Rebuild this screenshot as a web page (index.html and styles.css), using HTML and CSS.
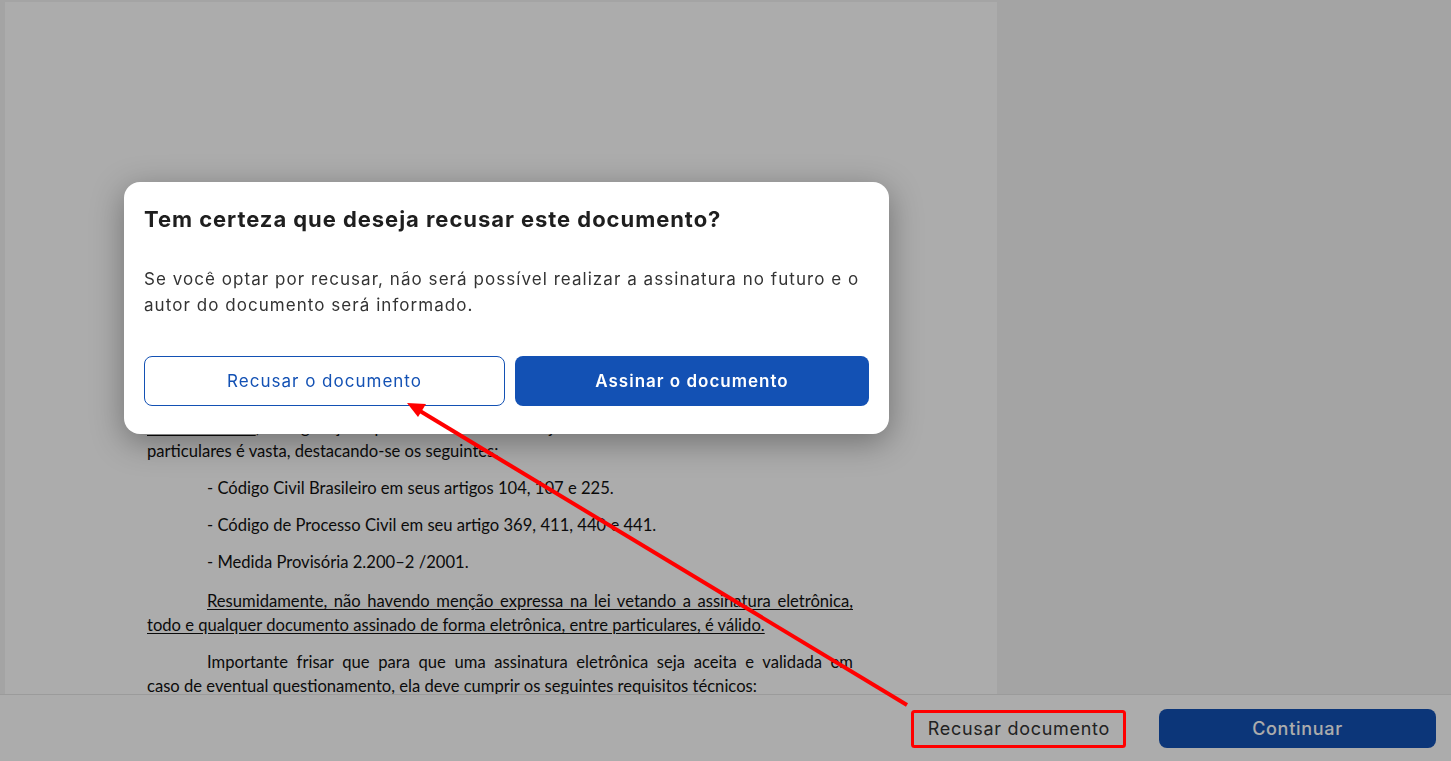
FILE: index.html
```html
<html lang="pt-BR">
<head>
    <meta charset="UTF-8">
    <meta name="viewport" content="width=device-width, initial-scale=1.0">
    <title>Assinatura de documento</title>
    <link rel="stylesheet" href="styles.css">
</head>
<body>
    <div class="app">
        <main class="viewer">
            <div class="page">
                <div class="doc">
                    <p class="cont"><span class="line"><u>Nesse sentido</u>, a legislação que trata da validade jurídica de documentos firmados entre</span>particulares é vasta, destacando-se os seguintes:</p>
                    <p>- Código Civil Brasileiro em seus artigos 104, 107 e 225.</p>
                    <p>- Código de Processo Civil em seu artigo 369, 411, 440 e 441.</p>
                    <p>- Medida Provisória 2.200–2 /2001.</p>
                    <p class="summary"><u>Resumidamente, não havendo menção expressa na lei vetando a assinatura eletrônica, todo e qualquer documento assinado de forma eletrônica, entre particulares, é válido.</u></p>
                    <p>Importante frisar que para que uma assinatura eletrônica seja aceita e validada em caso&nbsp;de eventual questionamento, ela deve cumprir os seguintes requisitos técnicos:</p>
                </div>
            </div>
            <aside class="side"></aside>
        </main>
        <footer class="actions">
            <button class="btn-text">Recusar documento</button>
            <button class="btn-continue">Continuar</button>
        </footer>
    </div>

    <div class="backdrop"></div>

    <div class="dialog">
        <h2>Tem certeza que deseja recusar este documento?</h2>
        <p>Se você optar por recusar, não será possível realizar a assinatura no futuro e o autor do documento será informado.</p>
        <div class="dialog-actions">
            <button class="btn-outline">Recusar o documento</button>
            <button class="btn-primary">Assinar o documento</button>
        </div>
    </div>

    <!-- red callout: box around the footer button, arrow up to the dialog -->
    <svg class="callout" width="1451" height="761" viewBox="0 0 1451 761">
        <rect x="912.5" y="711.5" width="212" height="35" rx="2" fill="none" stroke="#ff0000" stroke-width="3"/>
        <line x1="907" y1="705" x2="420" y2="411" stroke="#ff0000" stroke-width="4"/>
        <polygon points="407,403 426,404 418,417" fill="#ff0000"/>
    </svg>
</body>
</html>
```

FILE: styles.css
```css
body {
    margin: 0;
    font-family: Inter, "Noto Sans", sans-serif;
    background: #f3f3f3;
    overflow: hidden;
}

.app {
    width: 1451px;
    height: 761px;
    display: flex;
    flex-direction: column;
}

.viewer {
    height: 694px;
    display: flex;
    padding: 2px 0 0 5px;
    box-sizing: border-box;
    background: #f3f3f3;
    overflow: hidden;
}

.page {
    width: 992px;
    flex-shrink: 0;
    background: #fff;
}

.side {
    flex: 1;
}

.doc {
    width: 706px;
    padding: 413px 0 0 142px;
    font-family: Lato, "Liberation Sans", sans-serif;
    font-size: 16.6px;
    line-height: 24px;
    color: #111;
    text-align: justify;
}

.doc p {
    margin: 0 0 13px;
    text-indent: 60px;
}

.doc p.cont {
    text-indent: 0;
}

.doc p.summary {
    margin-top: 15px;
}

.doc .line {
    display: block;
    text-align-last: justify;
}

.doc u {
    text-underline-offset: 2px;
}

.actions {
    flex: 1;
    display: flex;
    align-items: center;
    justify-content: flex-end;
    gap: 33px;
    padding: 0 15px 0 0;
    background: #fff;
    border-top: 1px solid #e6e6e6;
}

.actions button {
    font-family: inherit;
    font-size: 18px;
    letter-spacing: 0.7px;
    height: 39px;
    border: none;
    cursor: pointer;
}

.btn-text {
    background: none;
    color: #333;
    padding: 0 16px;
}

.btn-continue {
    width: 277px;
    background: #1351b4;
    color: #fff;
    border-radius: 8px;
    font-weight: 500;
}

.backdrop {
    position: fixed;
    inset: 0;
    background: rgba(0, 0, 0, 0.325);
}

.dialog {
    position: absolute;
    left: 124px;
    top: 182px;
    width: 765px;
    box-sizing: border-box;
    padding: 24px 20px 28px 20px;
    background: #fff;
    border-radius: 16px;
    box-shadow: 0 8px 32px rgba(0, 0, 0, 0.35);
}

.dialog h2 {
    margin: 0;
    font-size: 22px;
    line-height: 26px;
    font-weight: 700;
    letter-spacing: 0.95px;
    color: #1e1e1e;
}

.dialog p {
    margin: 34px 0 38px;
    font-size: 17px;
    line-height: 26px;
    letter-spacing: 1.05px;
    color: #333;
}

.dialog-actions {
    display: grid;
    grid-template-columns: 361px 1fr;
    gap: 10px;
}

.dialog-actions button {
    height: 50px;
    border-radius: 8px;
    font-family: inherit;
    font-size: 17px;
    letter-spacing: 1px;
    cursor: pointer;
}

.btn-outline {
    background: #fff;
    border: 1px solid #1351b4;
    color: #1351b4;
}

.btn-primary {
    background: #1351b4;
    border: none;
    color: #fff;
    font-weight: 600;
    letter-spacing: 0.7px;
}

.callout {
    position: absolute;
    left: 0;
    top: 0;
    pointer-events: none;
}
```
